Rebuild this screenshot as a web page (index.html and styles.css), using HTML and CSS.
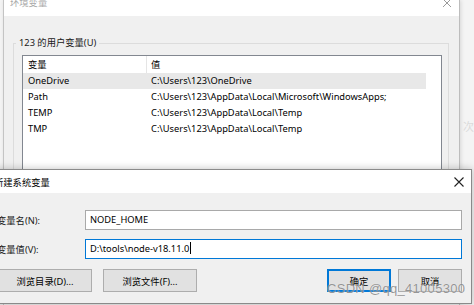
FILE: index.html
```html
<!DOCTYPE html>
<html lang="zh-CN">
<head>
    <meta charset="UTF-8">
    <meta name="viewport" content="width=device-width, initial-scale=1.0">
    <title>新建系统变量</title>
    <link rel="stylesheet" href="styles.css">
</head>
<body>
    <div class="desktop">
        <div class="env-window">
            <div class="env-title">
                <span class="env-title-text">环境变量</span>
                <svg class="env-close" width="10" height="10" viewBox="0 0 10 10">
                    <path d="M1 1 L9 9 M9 1 L1 9" stroke="#9a9a9a" stroke-width="1" fill="none"/>
                </svg>
            </div>
            <div class="env-body">
                <fieldset class="group">
                    <legend>123 的用户变量(U)</legend>
                    <div class="listview">
                        <div class="lv-row lv-head">
                            <span class="col-name">变量</span>
                            <span class="col-value">值</span>
                        </div>
                        <div class="lv-row selected">
                            <span class="col-name">OneDrive</span>
                            <span class="col-value">C:\Users\123\OneDrive</span>
                        </div>
                        <div class="lv-row">
                            <span class="col-name">Path</span>
                            <span class="col-value">C:\Users\123\AppData\Local\Microsoft\WindowsApps;</span>
                        </div>
                        <div class="lv-row">
                            <span class="col-name">TEMP</span>
                            <span class="col-value">C:\Users\123\AppData\Local\Temp</span>
                        </div>
                        <div class="lv-row">
                            <span class="col-name">TMP</span>
                            <span class="col-value">C:\Users\123\AppData\Local\Temp</span>
                        </div>
                    </div>
                </fieldset>
            </div>
        </div>

        <div class="side-text">次</div>

        <div class="dialog">
            <div class="dialog-title">
                <span>新建系统变量</span>
                <svg class="dialog-close" width="10" height="10" viewBox="0 0 10 10">
                    <path d="M0.5 0.5 L9.5 9.5 M9.5 0.5 L0.5 9.5" stroke="#222" stroke-width="1.1" fill="none"/>
                </svg>
            </div>
            <div class="dialog-body">
                <div class="form-grid">
                    <label class="form-label">变量名(N):</label>
                    <div class="field">NODE_HOME</div>
                    <label class="form-label">变量值(V):</label>
                    <div class="field focused">D:\tools\node-v18.11.0<span class="caret"></span></div>
                </div>
                <div class="button-row">
                    <div class="button-group">
                        <button class="btn btn-wide first">浏览目录(D)...</button>
                        <button class="btn btn-wide">浏览文件(F)...</button>
                    </div>
                    <div class="button-group right">
                        <button class="btn default">确定</button>
                        <button class="btn">取消</button>
                    </div>
                </div>
            </div>
        </div>

        <div class="watermark">CSDN @qq_41005300</div>
    </div>
</body>
</html>
```

FILE: styles.css
```css
body {
    margin: 0;
    padding: 0;
    font-family: "Noto Sans", "Noto Sans CJK SC", sans-serif;
    font-size: 9.3px;
    color: #000;
}

.desktop {
    position: relative;
    width: 474px;
    height: 305px;
    overflow: hidden;
    background-color: #f4f4f4;
}

/* background window */
.env-window {
    margin-left: 3px;
    width: 457px;
    height: 305px;
    box-sizing: border-box;
    background-color: #f0f0f0;
    border-left: 1px solid #c4c4c4;
    border-right: 1px solid #bdbdbd;
    box-shadow: 1px 0 4px rgba(0, 0, 0, 0.12);
}

.env-title {
    display: flex;
    justify-content: space-between;
    height: 16px;
    background-color: #fff;
    padding: 0 7px 0 6px;
    overflow: hidden;
}

.env-title-text {
    line-height: 6px;
    color: #a8a8a8;
}

.env-close {
    margin-top: -2px;
}

.env-body {
    padding: 19px 10px 0 9px;
}

.group {
    margin: 0;
    padding: 4px 6px 0 0;
    border: 1px solid #dcdcdc;
}

.group legend {
    margin-left: 2px;
    padding: 0 3px;
    line-height: 16px;
    color: #1a1a1a;
}

.listview {
    margin-left: 8px;
    width: 420px;
    height: 140px;
    box-sizing: border-box;
    background-color: #fff;
    border: 1px solid #828790;
}

.lv-row {
    display: flex;
    width: 403px;
    height: 16px;
    line-height: 16px;
}

.lv-row.lv-head {
    height: 17px;
    line-height: 17px;
}

.lv-row.selected {
    background-color: #e8e8e8;
}

.col-name {
    flex-shrink: 0;
    width: 124px;
    padding-left: 5px;
    box-sizing: border-box;
}

.lv-head .col-name {
    border-right: 1px solid #e5e5e5;
}

.col-value {
    padding-left: 4px;
    white-space: nowrap;
}

.side-text {
    position: absolute;
    left: 463px;
    top: 118px;
    font-size: 11px;
    color: #dadada;
}

/* new variable dialog */
.dialog {
    position: absolute;
    top: 169px;
    left: -20px;
    width: 492px;
    height: 135px;
    box-sizing: border-box;
    border: 1px solid #8a8a8a;
    background-color: #f0f0f0;
    box-shadow: 0 0 8px rgba(0, 0, 0, 0.25);
}

.dialog-title {
    display: flex;
    justify-content: space-between;
    align-items: center;
    height: 23px;
    padding: 0 7px 0 13px;
    background-color: #fff;
}

.dialog-body {
    padding: 17px 9px 0 16px;
}

.form-grid {
    display: grid;
    grid-template-columns: 88px 1fr;
    row-gap: 9px;
    align-items: center;
}

.form-label {
    color: #1a1a1a;
}

.field {
    height: 20px;
    line-height: 18px;
    padding-left: 4px;
    box-sizing: border-box;
    background-color: #fff;
    border: 1px solid #a9a9a9;
}

.field.focused {
    border-color: #0078d7;
}

.caret {
    display: inline-block;
    width: 1px;
    height: 12px;
    margin-left: 1px;
    vertical-align: -2px;
    background-color: #000;
}

.button-row {
    display: flex;
    justify-content: space-between;
    margin-top: 10px;
}

.button-group {
    display: flex;
    gap: 11px;
}

.button-group.right {
    gap: 7px;
}

.btn {
    width: 64px;
    height: 23px;
    padding: 0;
    font-family: inherit;
    font-size: 9.3px;
    color: #000;
    background-color: #e1e1e1;
    border: 1px solid #adadad;
    border-radius: 0;
}

.btn-wide {
    width: 94px;
}

.btn.first {
    margin-left: 1px;
}

.btn.default {
    border: 2px solid #0078d7;
}

.watermark {
    position: absolute;
    left: 327px;
    top: 281px;
    white-space: nowrap;
    font-family: "Liberation Sans", sans-serif;
    font-size: 13px;
    color: rgba(105, 105, 105, 0.7);
    letter-spacing: 0.3px;
    text-shadow: 0 0 1px rgba(255, 255, 255, 0.8);
}
```
